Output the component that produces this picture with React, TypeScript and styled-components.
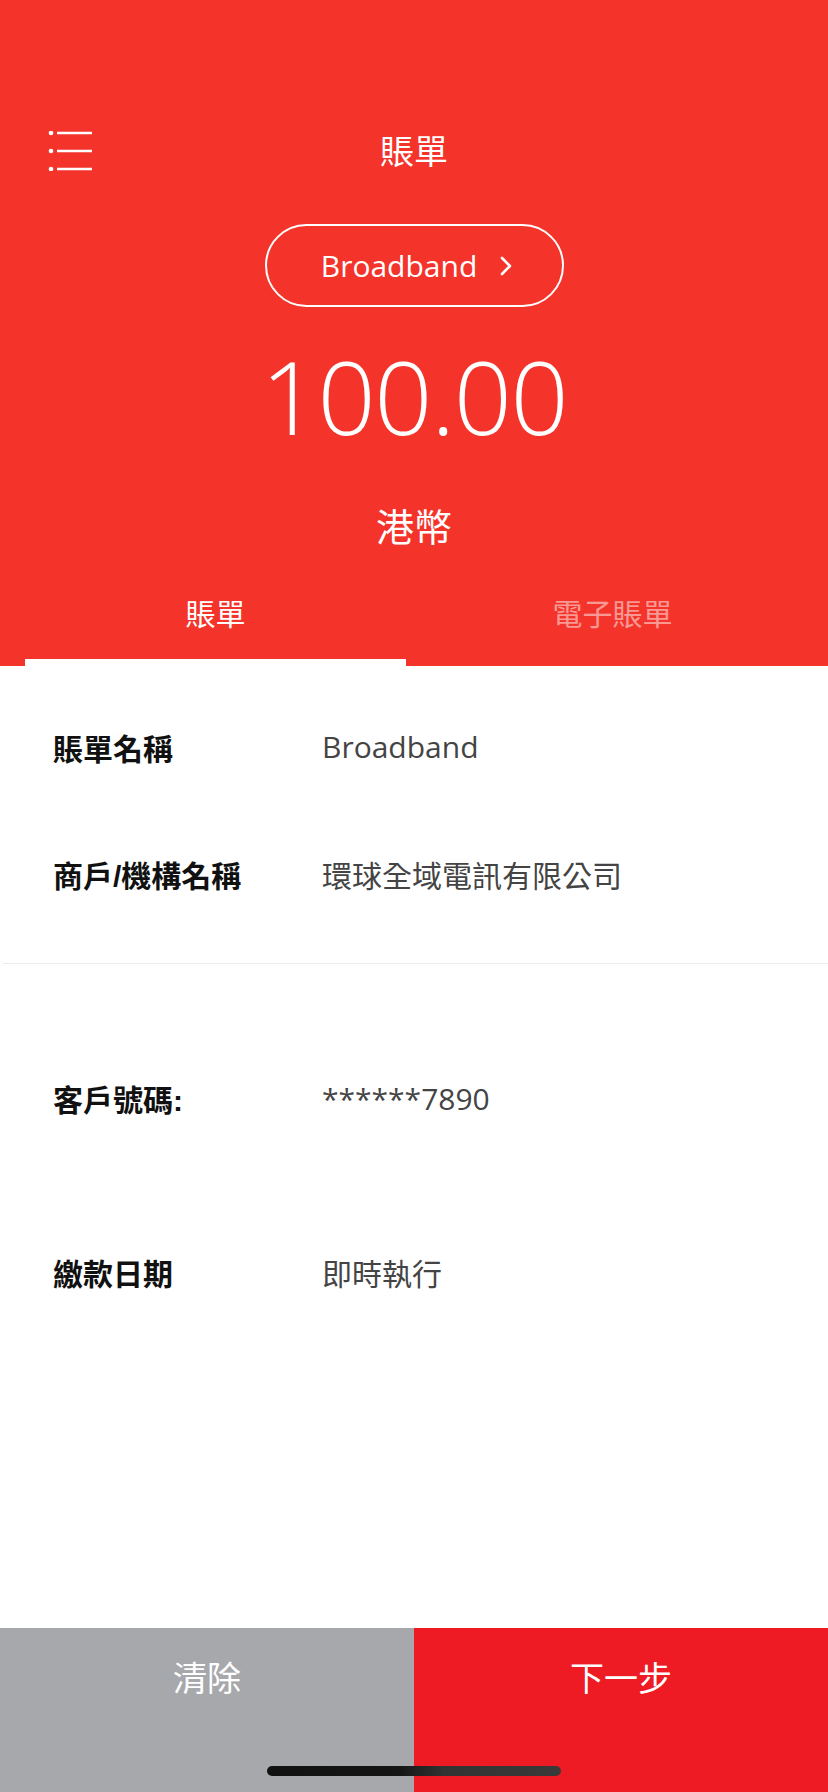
import React from "react";
import styled, { createGlobalStyle } from "styled-components";

const GlobalStyle = createGlobalStyle`
  html, body {
    margin: 0;
    padding: 0;
    background: #fff;
  }
  body {
    font-family: "Open Sans", "Noto Sans", "Noto Sans CJK TC", sans-serif;
  }
`;

const cjk = `"Open Sans", "Noto Sans CJK TC", sans-serif`;

const Page = styled.div`
  width: 828px;
  height: 1792px;
  display: flex;
  flex-direction: column;
  overflow: hidden;
`;

const Header = styled.header`
  background: #f4332a;
  padding-top: 123px;
  display: flex;
  flex-direction: column;
  align-items: center;
  color: #fff;
`;

const NavBar = styled.div`
  position: relative;
  width: 100%;
  height: 56px;
  display: flex;
  align-items: center;
  justify-content: center;
`;

const MenuButton = styled.button`
  position: absolute;
  left: 46px;
  top: 8px;
  width: 48px;
  height: 40px;
  padding: 0;
  border: none;
  background: transparent;
  cursor: pointer;
  display: flex;
  align-items: center;
  justify-content: center;
`;

const Title = styled.h1`
  margin: 0;
  font-family: ${cjk};
  font-weight: 400;
  font-size: 34px;
  line-height: 1;
`;

const AccountPill = styled.button`
  margin-top: 45px;
  width: 299px;
  height: 83px;
  border: 2px solid #fff;
  border-radius: 42px;
  background: transparent;
  color: #fff;
  display: flex;
  align-items: center;
  justify-content: center;
  gap: 22px;
  font-family: "Open Sans", sans-serif;
  font-size: 30px;
  padding: 0 0 0 6px;
  cursor: pointer;
`;

const Amount = styled.div`
  margin-top: 38px;
  font-family: "Open Sans", sans-serif;
  font-weight: 300;
  font-size: 102px;
  line-height: 1;
  letter-spacing: -1.5px;
`;

const Currency = styled.div`
  margin-top: 60px;
  font-family: ${cjk};
  font-size: 38px;
  line-height: 1;
`;

const TabBar = styled.nav`
  margin-top: 54px;
  width: 100%;
  box-sizing: border-box;
  padding: 0 17px;
  display: flex;
`;

const Tab = styled.div<{ active?: boolean }>`
  flex: 1;
  display: flex;
  flex-direction: column;
  align-items: center;
  font-family: ${cjk};
  font-size: 30px;
  line-height: 1;
  color: ${({ active }) => (active ? "#fff" : "rgba(255, 255, 255, 0.5)")};

  &::after {
    content: "";
    align-self: stretch;
    margin: 30px 8px 0;
    height: 7px;
    background: ${({ active }) => (active ? "#fff" : "transparent")};
  }
`;

const Section = styled.section<{ top: number; bottom: number; divided?: boolean }>`
  padding: ${({ top, bottom }) => `${top}px 0 ${bottom}px`};
  border-bottom: ${({ divided }) => (divided ? "1px solid #ececec" : "none")};
  margin-left: 3px;
`;

const Row = styled.div<{ h: number }>`
  height: ${({ h }) => h}px;
  display: flex;
  align-items: center;
  padding-left: 50px;
`;

const Label = styled.div`
  width: 269px;
  font-family: "Liberation Sans", "Noto Sans CJK TC", sans-serif;
  font-weight: 700;
  font-size: 30px;
  color: #111;
`;

const Value = styled.div`
  font-family: ${cjk};
  font-size: 30px;
  color: #444;
`;

const Spacer = styled.div`
  flex: 1;
`;

const Footer = styled.footer`
  position: relative;
  height: 164px;
  display: flex;
`;

const FooterButton = styled.button<{ primary?: boolean }>`
  flex: 1;
  border: none;
  margin: 0;
  padding: 33px 0 0;
  display: flex;
  justify-content: center;
  align-items: flex-start;
  background: ${({ primary }) => (primary ? "#ee1a24" : "#a7a8ab")};
  color: #fff;
  font-family: ${cjk};
  font-size: 34px;
  line-height: 1;
  cursor: pointer;
`;

const HomeIndicator = styled.div`
  position: absolute;
  left: 267px;
  bottom: 16px;
  width: 294px;
  height: 10px;
  border-radius: 5px;
  background: linear-gradient(90deg, #111 0%, #151515 45%, #333 60%, #3a3a3a 100%);
`;

const MenuIcon = () => (
  <svg width="46" height="40" viewBox="0 0 46 40" fill="none">
    {[2, 20, 38].map((y) => (
      <g key={y}>
        <circle cx="4" cy={y} r="2.3" fill="#fff" />
        <line x1="10" y1={y} x2="45" y2={y} stroke="#fff" strokeWidth="2.4" />
      </g>
    ))}
  </svg>
);

const Chevron = () => (
  <svg width="14" height="20" viewBox="0 0 14 20" fill="none">
    <path d="M3 2 L11 10 L3 18" stroke="#fff" strokeWidth="2.6" strokeLinecap="round" strokeLinejoin="round" />
  </svg>
);

const App: React.FC = () => {
  return (
    <Page>
      <GlobalStyle />
      <Header>
        <NavBar>
          <MenuButton aria-label="menu">
            <MenuIcon />
          </MenuButton>
          <Title>賬單</Title>
        </NavBar>
        <AccountPill>
          <span>Broadband</span>
          <Chevron />
        </AccountPill>
        <Amount>100.00</Amount>
        <Currency>港幣</Currency>
        <TabBar>
          <Tab active>賬單</Tab>
          <Tab>電子賬單</Tab>
        </TabBar>
      </Header>

      <Section top={17} bottom={26} divided>
        <Row h={127}>
          <Label>賬單名稱</Label>
          <Value>Broadband</Value>
        </Row>
        <Row h={127}>
          <Label>商戶/機構名稱</Label>
          <Value>環球全域電訊有限公司</Value>
        </Row>
      </Section>

      <Section top={47} bottom={0}>
        <Row h={174}>
          <Label>客戶號碼:</Label>
          <Value>******7890</Value>
        </Row>
        <Row h={174}>
          <Label>繳款日期</Label>
          <Value>即時執行</Value>
        </Row>
      </Section>

      <Spacer />

      <Footer>
        <FooterButton>清除</FooterButton>
        <FooterButton primary>下一步</FooterButton>
        <HomeIndicator />
      </Footer>
    </Page>
  );
};

export default App;
